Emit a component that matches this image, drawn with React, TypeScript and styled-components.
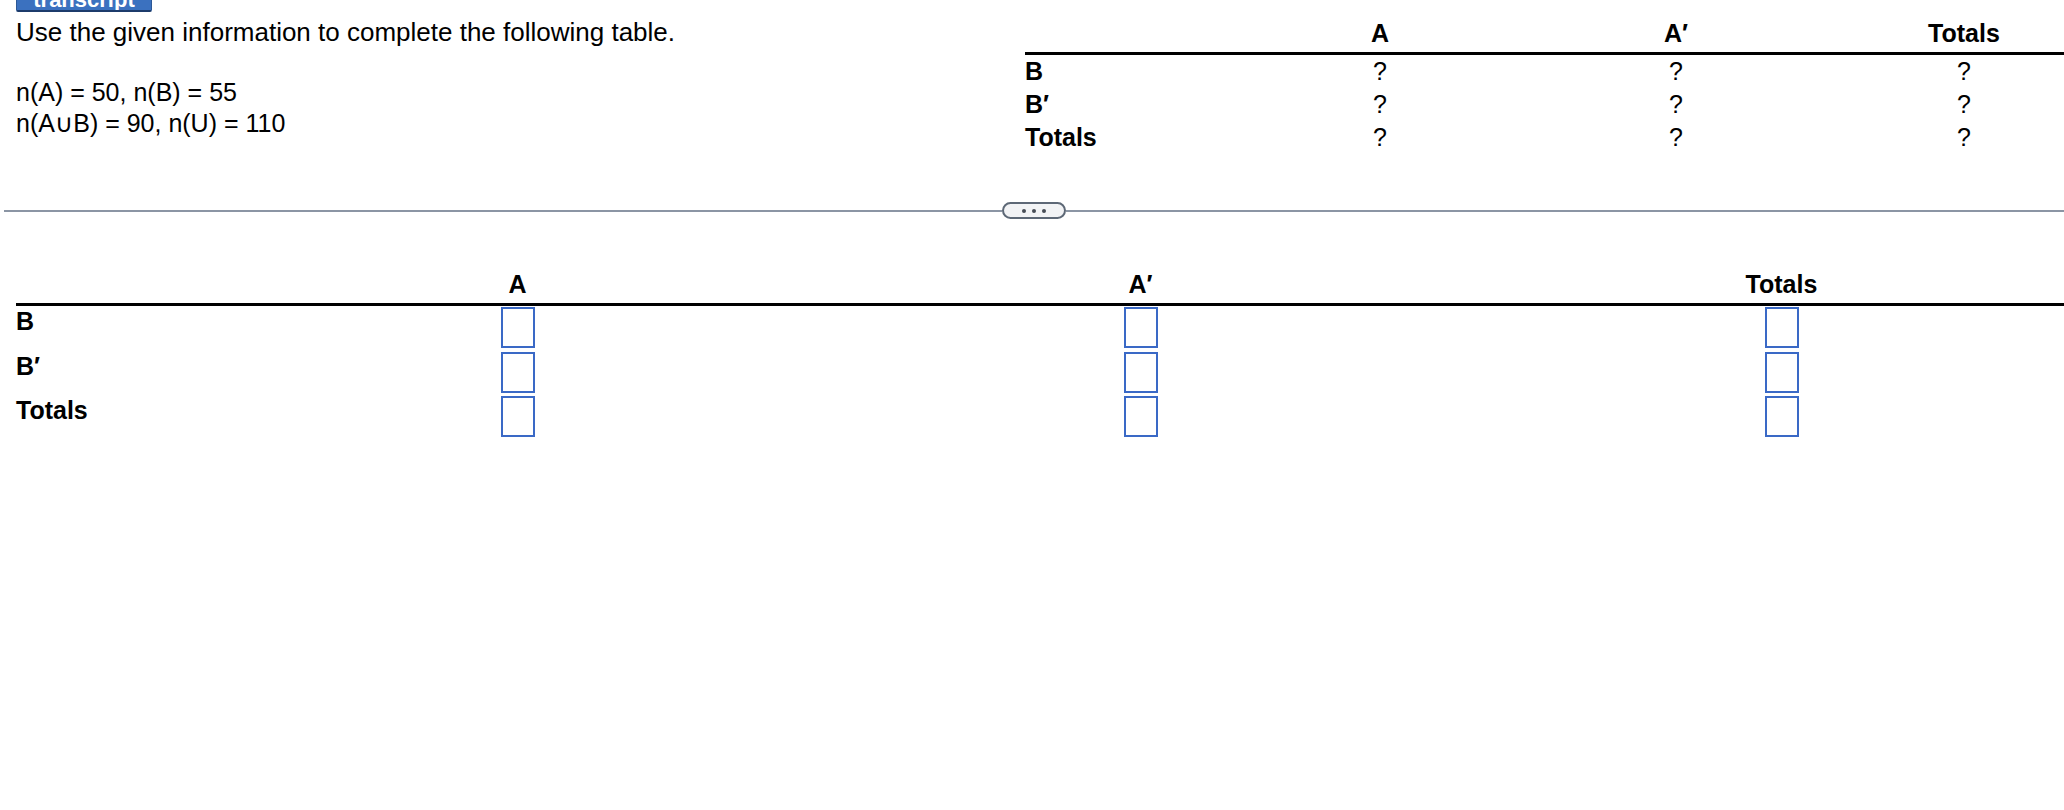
import React from "react";
import styled, { createGlobalStyle } from "styled-components";

const GlobalStyle = createGlobalStyle`
  html, body {
    margin: 0;
    padding: 0;
    background: #ffffff;
    overflow: hidden;
  }
  body {
    font-family: "Liberation Sans", Arial, "DejaVu Sans", sans-serif;
    color: #000;
  }
`;

const Page = styled.div`
  width: 2064px;
  height: 810px;
  overflow: hidden;
  padding: 0 0 0 4px;
  box-sizing: border-box;
`;

const TopSection = styled.section`
  display: flex;
  align-items: flex-start;
  margin-left: 12px;
`;

const LeftPane = styled.div`
  width: 1009px;
  flex: none;
  display: flex;
  flex-direction: column;
  align-items: flex-start;
`;

const TranscriptButton = styled.button`
  margin-top: -28px;
  width: 136px;
  height: 40px;
  box-sizing: border-box;
  padding: 16px 0 0;
  font-family: "Liberation Sans", Arial, sans-serif;
  font-weight: bold;
  font-size: 22px;
  line-height: 22px;
  color: #ffffff;
  background: #3b71bf;
  border: 1px solid #2c5896;
  border-bottom: 2px solid #1c3b6b;
  border-radius: 0 0 2px 2px;
  cursor: pointer;
  overflow: hidden;
`;

const Prompt = styled.p`
  margin: 5px 0 0;
  font-size: 26px;
  line-height: 30px;
  white-space: nowrap;
`;

const Given = styled.div`
  margin-top: 30px;
  display: flex;
  flex-direction: column;
`;

const MathLine = styled.div`
  font-size: 25px;
  line-height: 31px;
  white-space: nowrap;
`;

const DataGrid = styled.div<{ $cols: string }>`
  display: grid;
  grid-template-columns: ${(p) => p.$cols};
  flex: none;
`;

const HeadCell = styled.div`
  font-weight: bold;
  font-size: 25px;
  line-height: 30px;
  text-align: center;
  padding-bottom: 4px;
  border-bottom: 3px solid #000;
  white-space: nowrap;
`;

const RowLabel = styled.div<{ $h: number; $lh: number }>`
  font-weight: bold;
  font-size: 25px;
  line-height: ${(p) => p.$lh}px;
  height: ${(p) => p.$h}px;
  white-space: nowrap;
`;

const ValueCell = styled.div<{ $h: number }>`
  font-size: 25px;
  line-height: ${(p) => p.$h}px;
  height: ${(p) => p.$h}px;
  text-align: center;
`;

const TopTable = styled(DataGrid)`
  padding-top: 18px;
`;

const Separator = styled.div`
  margin-top: 48px;
  display: flex;
  align-items: center;
  height: 17px;
`;

const Rule = styled.div`
  flex: 1;
  height: 2px;
  background: #8b95a4;
`;

const Pill = styled.button`
  width: 64px;
  height: 17px;
  box-sizing: border-box;
  border: 2px solid #5d6876;
  border-radius: 9px;
  background: #f2f3f5;
  display: flex;
  align-items: center;
  justify-content: center;
  gap: 6px;
  padding: 0;
  flex: none;
`;

const Dot = styled.span`
  width: 4px;
  height: 4px;
  border-radius: 50%;
  background: #474d56;
`;

const AnswerTable = styled(DataGrid)`
  margin: 50px 0 0 12px;
`;

const InputCell = styled.div`
  height: 44.5px;
  display: flex;
  justify-content: center;
  align-items: flex-start;
  padding-top: 1px;
  box-sizing: border-box;
`;

const AnswerBox = styled.input`
  width: 34px;
  height: 41px;
  box-sizing: border-box;
  border: 2px solid #3a69c6;
  border-radius: 0;
  background: #fff;
  padding: 0;
  margin: 0;
  outline: none;
`;

const columns = ["A", "A\u2032", "Totals"];
const rows = ["B", "B\u2032", "Totals"];

export default function App() {
  return (
    <Page>
      <GlobalStyle />
      <TopSection>
        <LeftPane>
          <TranscriptButton>transcript</TranscriptButton>
          <Prompt>Use the given information to complete the following table.</Prompt>
          <Given>
            <MathLine>n(A) = 50, n(B) = 55</MathLine>
            <MathLine>n(A∪B) = 90, n(U) = 110</MathLine>
          </Given>
        </LeftPane>
        <TopTable $cols="207px 296px 296px 280px">
          <HeadCell />
          {columns.map((c) => (
            <HeadCell key={c}>{c}</HeadCell>
          ))}
          {rows.map((r) => (
            <React.Fragment key={r}>
              <RowLabel $h={33} $lh={33}>
                {r}
              </RowLabel>
              {columns.map((c) => (
                <ValueCell key={c} $h={33}>
                  ?
                </ValueCell>
              ))}
            </React.Fragment>
          ))}
        </TopTable>
      </TopSection>

      <Separator>
        <Rule />
        <Pill aria-label="more">
          <Dot />
          <Dot />
          <Dot />
        </Pill>
        <Rule />
      </Separator>

      <AnswerTable $cols="190px 623px 623px 659px">
        <HeadCell />
        {columns.map((c) => (
          <HeadCell key={c}>{c}</HeadCell>
        ))}
        {rows.map((r) => (
          <React.Fragment key={r}>
            <RowLabel $h={44.5} $lh={30}>
              {r}
            </RowLabel>
            {columns.map((c) => (
              <InputCell key={c}>
                <AnswerBox aria-label={`${r} ${c}`} />
              </InputCell>
            ))}
          </React.Fragment>
        ))}
      </AnswerTable>
    </Page>
  );
}
